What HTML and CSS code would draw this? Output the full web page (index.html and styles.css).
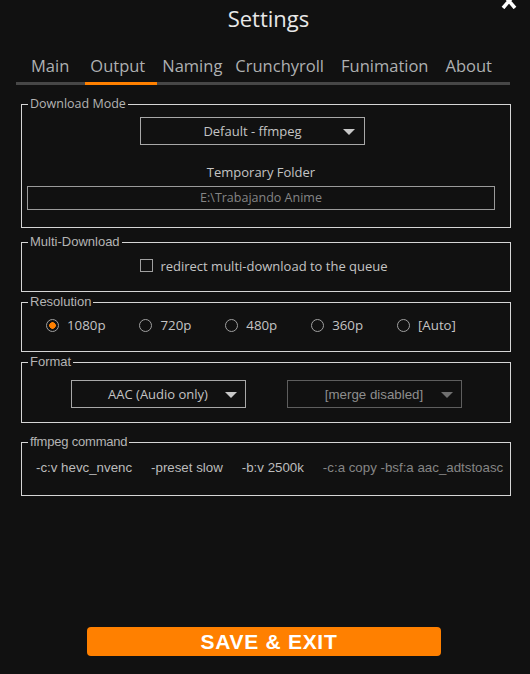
FILE: index.html
```html
<!DOCTYPE html>
<html>
<head>
<meta charset="utf-8">
<link rel="stylesheet" href="styles.css">
</head>
<body>
<div class="app">
  <svg class="close" width="16" height="16" viewBox="0 0 16 16"><path d="M2 1 L14 15 M14 1 L2 15" stroke="#fff" stroke-width="3.6" fill="none"/></svg>
  <div class="title">Settings</div>
  <nav class="tabs">
    <span class="tab first">Main</span>
    <span class="tab active">Output</span>
    <span class="tab third">Naming</span>
    <span class="tab">Crunchyroll</span>
    <span class="tab">Funimation</span>
    <span class="tab">About</span>
  </nav>

  <fieldset class="group g1">
    <legend class="seg">Download Mode</legend>
    <div class="select mode"><span class="sel-text">Default - ffmpeg</span><span class="arrow"></span></div>
    <div class="label">Temporary Folder</div>
    <div class="input">E:\Trabajando Anime</div>
  </fieldset>

  <fieldset class="group g2">
    <legend>Multi-Download</legend>
    <div class="check-row"><span class="checkbox"></span><span>redirect multi-download to the queue</span></div>
  </fieldset>

  <fieldset class="group g3">
    <legend>Resolution</legend>
    <div class="radio-row">
      <label class="radio-item"><span class="radio on"></span>1080p</label>
      <label class="radio-item"><span class="radio"></span>720p</label>
      <label class="radio-item"><span class="radio"></span>480p</label>
      <label class="radio-item"><span class="radio"></span>360p</label>
      <label class="radio-item"><span class="radio"></span>[Auto]</label>
    </div>
  </fieldset>

  <fieldset class="group g4">
    <legend>Format</legend>
    <div class="format-row">
      <div class="select fmt"><span class="sel-text">AAC (Audio only)</span><span class="arrow"></span></div>
      <div class="select fmt disabled"><span class="sel-text">[merge disabled]</span><span class="arrow"></span></div>
    </div>
  </fieldset>

  <fieldset class="group g5">
    <legend class="tight">ffmpeg command</legend>
    <div class="cmd-row">
      <span>-c:v hevc_nvenc</span>
      <span>-preset slow</span>
      <span>-b:v 2500k</span>
      <span class="dim">-c:a copy -bsf:a aac_adtstoasc</span>
    </div>
  </fieldset>

  <button class="save">SAVE &amp; EXIT</button>
</div>
</body>
</html>
```
FILE: styles.css
```css
* { box-sizing: border-box; }
html, body { margin: 0; padding: 0; background: #111111; }
body { font-family: "Open Sans", "Noto Sans", sans-serif; color: #c4c4c4; }
.app {
  position: relative;
  height: 674px;
  display: flex;
  flex-direction: column;
  overflow: hidden;
}
.close { position: absolute; left: 501px; top: -7px; }
.title {
  height: 37px;
  line-height: 37px;
  font-size: 22px;
  color: #e8e8e8;
  text-align: center;
  padding-left: 7px;
}
.tabs {
  margin: 17px 20px 0 16px;
  display: flex;
  gap: 17px;
  padding: 0 0 0 15px;
  border-bottom: 3px solid #474747;
}
.tab {
  font-size: 16.5px;
  line-height: 24px;
  padding: 0 0 4px;
  color: #aeb0b2;
  border-bottom: 3px solid transparent;
  margin-bottom: -3px;
}
.tab.first { margin-right: 4px; }
.tab.third { margin-right: -4px; }
.tab.active {
  border-bottom-color: #ff8000;
  padding: 0 12px 4px 5px;
  margin: 0 -12px -3px -5px;
}

.group {
  margin: 0 19px 0 21px;
  padding: 0;
  border: 1px solid #d6d6d6;
  min-width: 0;
  display: flex;
  flex-direction: column;
}
.group legend {
  font-family: "Liberation Sans", Arial, sans-serif;
  font-size: 13px;
  line-height: 14px;
  padding: 0 2px;
  margin-left: 6px;
  color: #b4b4b4;
}
.group legend.seg { font-family: "Open Sans", sans-serif; font-size: 12.5px; }
.group legend.tight { letter-spacing: -0.2px; }

.g1 { margin-top: 12px; padding-bottom: 17px; }
.g2 { margin-top: 7px; padding-bottom: 17px; }
.g3 { margin-top: 3px; padding-bottom: 18px; }
.g4 { margin-top: 3px; padding-bottom: 14px; }
.g5 { margin-top: 12px; padding-bottom: 19px; }

.select {
  position: relative;
  height: 28px;
  border: 1px solid #a8a8a8;
  display: flex;
  align-items: center;
  justify-content: center;
  font-size: 13px;
  color: #c4c4c4;
}
.arrow {
  position: absolute;
  top: 11px;
  width: 0; height: 0;
  border-left: 6px solid transparent;
  border-right: 6px solid transparent;
  border-top: 6px solid #c8c8c8;
}
.mode { width: 225px; margin: 6px 0 0 118px; }
.mode .arrow { right: 9px; }
.label {
  margin-top: 19px;
  line-height: 16px;
  font-size: 13px;
  text-align: center;
  margin-right: 10px;
  color: #c4c4c4;
}
.input {
  margin: 6px 15px 0 5px;
  height: 24px;
  border: 1px solid #9a9a9a;
  font-size: 12.5px;
  line-height: 22px;
  text-align: center;
  color: #858585;
}
.check-row {
  padding-top: 9px;
  height: 25px;
  display: flex;
  justify-content: center;
  align-items: flex-start;
  gap: 7px;
  font-size: 13px;
  line-height: 16px;
  padding-right: 4px;
}
.checkbox {
  width: 13px; height: 13px;
  border: 1px solid #a0a0a0;
  margin-top: 1px;
}
.radio-row {
  padding: 8px 54px 0 24px;
  display: flex;
  justify-content: space-between;
  font-size: 13.3px;
  line-height: 16px;
}
.radio-item { display: flex; align-items: center; gap: 8px; }
.radio {
  width: 13px; height: 13px;
  border: 1px solid #a0a0a0;
  border-radius: 50%;
}
.radio.on {
  background: radial-gradient(circle, #ff8000 0 3px, #111 3.6px);
}
.format-row {
  margin-top: 11px;
  display: flex;
  justify-content: center;
  gap: 41px;
}
.fmt { width: 175px; }
.fmt .arrow { right: 8px; }
.fmt.disabled {
  border-color: #5e5e5e;
  color: #8e8e8e;
  font-family: "Liberation Sans", Arial, sans-serif;
  font-size: 13.3px;
}
.fmt.disabled .arrow { border-top-color: #707070; }
.cmd-row {
  margin-top: 11px;
  padding-left: 14px;
  display: flex;
  gap: 19px;
  font-family: "Liberation Sans", Arial, sans-serif;
  font-size: 13.3px;
  line-height: 16px;
  color: #bcbcbc;
  white-space: nowrap;
}
.cmd-row .dim { color: #858585; }
.save {
  margin: auto 0 18px 87px;
  width: 354px;
  height: 29px;
  border: none;
  border-radius: 4px;
  background: #ff8000;
  color: #ffffff;
  font-family: "Liberation Sans", Arial, sans-serif;
  font-weight: bold;
  font-size: 21px;
  letter-spacing: 0.7px;
  padding: 0 0 0 10px;
  line-height: 29px;
}
```
